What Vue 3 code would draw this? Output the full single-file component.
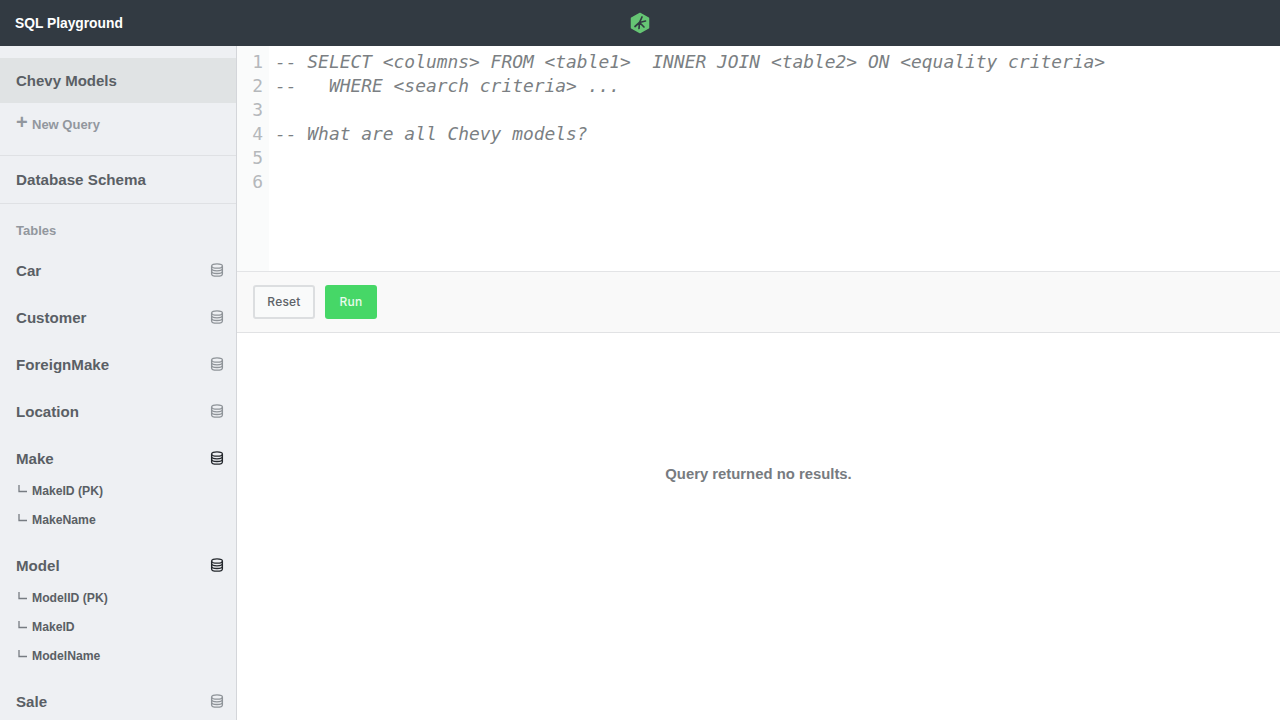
<script setup>
const lines = [
  '-- SELECT <columns> FROM <table1>  INNER JOIN <table2> ON <equality criteria>',
  '--   WHERE <search criteria> ...',
  '',
  '-- What are all Chevy models?',
  '',
  ''
]
const tables = [
  { name: 'Car', cols: [] },
  { name: 'Customer', cols: [] },
  { name: 'ForeignMake', cols: [] },
  { name: 'Location', cols: [] },
  { name: 'Make', open: true, cols: ['MakeID (PK)', 'MakeName'] },
  { name: 'Model', open: true, cols: ['ModelID (PK)', 'MakeID', 'ModelName'] },
  { name: 'Sale', cols: [] }
]
</script>

<template>
  <div class="app">
    <header class="top">
      <span class="title">SQL Playground</span>
      <svg class="logo" width="20" height="22" viewBox="0 0 20 22">
        <path d="M10 1.5 18.5 6.2v9.6L10 20.5 1.5 15.8V6.2z" fill="#66c574" stroke="#66c574" stroke-width="1.5" stroke-linejoin="round"/>
        <path d="M5 14.5 9.5 10.5 12 5M9.5 10.5 15.5 9M9.5 10.5 9 16.5M9.5 10.5 14 15" fill="none" stroke="#323a42" stroke-width="1.7" stroke-linecap="round"/>
      </svg>
    </header>
    <div class="main">
      <aside class="side">
        <div class="active">Chevy Models</div>
        <div class="new"><span class="plus">+</span>New Query</div>
        <div class="schema">Database Schema</div>
        <div class="tables-label">Tables</div>
        <section v-for="t in tables" :key="t.name" class="table" :class="{ open: t.open }">
          <div class="table-row">
            <span>{{ t.name }}</span>
            <svg class="db" width="14" height="14" viewBox="0 0 14 14" fill="none" stroke="currentColor" stroke-width="1.3">
              <ellipse cx="7" cy="3" rx="5.4" ry="2.2"/>
              <path d="M1.6 3v8c0 1.2 2.4 2.2 5.4 2.2s5.4-1 5.4-2.2V3"/>
              <path d="M1.6 5.6c0 1.2 2.4 2.2 5.4 2.2s5.4-1 5.4-2.2M1.6 8.3c0 1.2 2.4 2.2 5.4 2.2s5.4-1 5.4-2.2"/>
            </svg>
          </div>
          <div class="cols" v-if="t.cols.length">
            <div v-for="c in t.cols" :key="c" class="col">
              <svg width="9" height="8" viewBox="0 0 9 8" fill="none" stroke="#777c82" stroke-width="1.3"><path d="M1 0v6.5h8"/></svg>
              <span>{{ c }}</span>
            </div>
          </div>
        </section>
      </aside>
      <main class="content">
        <div class="editor">
          <div class="gutter"><div v-for="(l, i) in lines" :key="i">{{ i + 1 }}</div></div>
          <div class="code"><div v-for="(l, i) in lines" :key="i" class="line">{{ l }}</div></div>
        </div>
        <div class="actions">
          <button class="btn reset">Reset</button>
          <button class="btn run">Run</button>
        </div>
        <div class="results">Query returned no results.</div>
      </main>
    </div>
  </div>
</template>

<style>
html, body { margin: 0; overflow: hidden; }
</style>

<style scoped>
.app { width: 1280px; height: 720px; display: flex; flex-direction: column; overflow: hidden; font-family: "Liberation Sans", Arial, sans-serif; font-weight: 700; background: #fff; }
.top { flex: none; height: 46px; background: #323a42; position: relative; display: flex; align-items: center; padding-left: 15px; box-sizing: border-box; }
.title { color: #fff; font-size: 13.8px; }
.logo { position: absolute; left: 630px; top: 12px; }
.main { flex: 1; display: flex; min-height: 0; }
.side { flex: none; width: 237px; box-sizing: border-box; background: #eef0f3; border-right: 1px solid #d4d6da; padding-top: 12px; color: #5a5f65; overflow: hidden; }
.active { height: 45px; line-height: 45px; padding-left: 16px; font-size: 15px; background: #e0e3e4; }
.new { height: 53px; box-sizing: border-box; padding: 9px 0 0 16px; line-height: 22px; font-size: 13px; color: #92979e; display: flex; align-items: baseline; border-bottom: 1px solid #dfe1e4; }
.plus { font-size: 20px; font-weight: 700; width: 16px; line-height: 20px; }
.schema { height: 47px; line-height: 47px; padding-left: 16px; font-size: 15.2px; border-bottom: 1px solid #dfe1e4; }
.tables-label { height: 50px; box-sizing: border-box; padding: 18px 0 0 16px; line-height: 17px; font-size: 13px; color: #92979e; }
.table { padding-bottom: 15px; }
.table-row { height: 32px; display: flex; align-items: center; justify-content: space-between; padding: 0 12px 0 16px; font-size: 15.1px; }
.db { color: #8f9499; }
.open .db { color: #24282d; }
.cols { margin-top: 2px; }
.col { height: 29px; display: flex; align-items: center; padding-left: 18px; font-size: 12.2px; gap: 5px; }
.col svg { margin-top: -4px; }
.content { flex: 1; min-width: 0; display: flex; flex-direction: column; }
.editor { height: 226px; flex: none; display: flex; box-sizing: border-box; padding-top: 4px; font: normal 17.92px/24px "DejaVu Sans Mono", monospace; border-bottom: 1px solid #e3e4e6; background: linear-gradient(#fafbfb, #fafbfb) 0 0 / 32px 100% no-repeat; }
.gutter { width: 26px; padding-right: 6px; text-align: right; color: #b5b8bb; }
.code { padding-left: 6px; font-style: italic; color: #7b7f83; white-space: pre; }
.line { height: 24px; }
.actions { height: 61px; flex: none; box-sizing: border-box; background: #f9f9f9; border-bottom: 1px solid #e1e2e4; display: flex; align-items: center; gap: 10px; padding-left: 16px; }
.btn { height: 34px; border-radius: 3px; font: 500 12px Inter, "Liberation Sans", Arial, sans-serif; letter-spacing: 0.2px; cursor: pointer; padding: 0 0 2px; }
.reset { width: 62px; background: #f9fafa; color: #5e6368; border: 2px solid #dcdee0; }
.run { width: 52px; background: #46d767; color: #e8fbec; border: none; }
.results { flex: 1; display: flex; justify-content: center; padding-top: 132px; box-sizing: border-box; font-size: 14.85px; color: #777b80; line-height: 18px; }
</style>
